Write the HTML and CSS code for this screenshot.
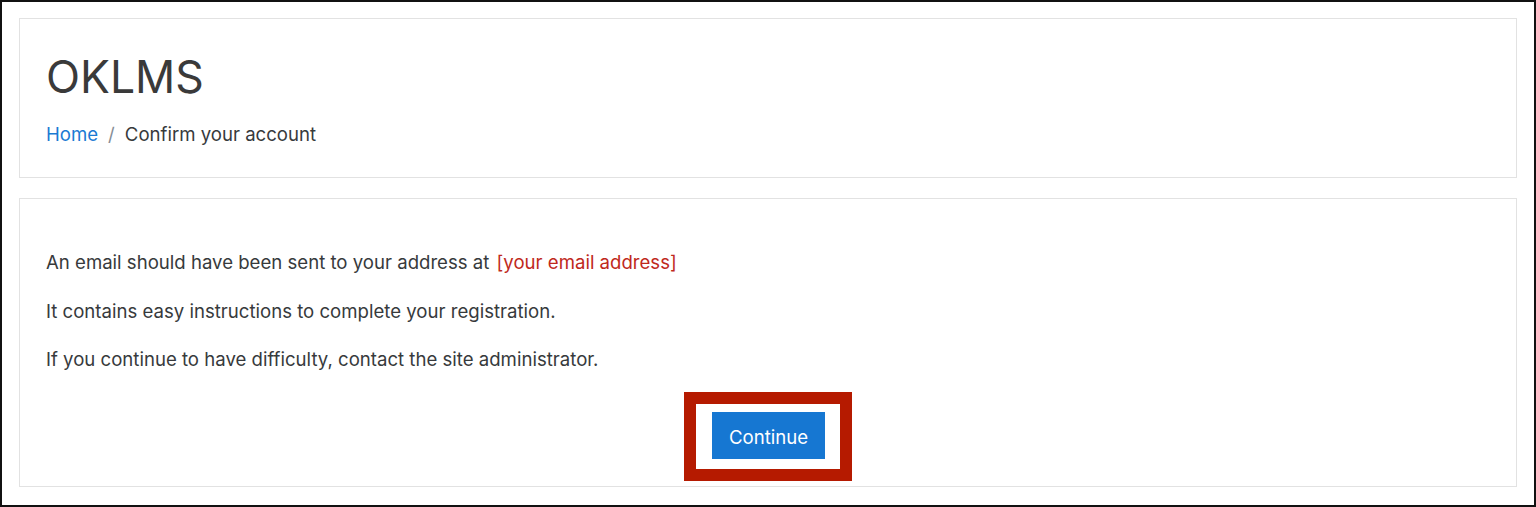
FILE: index.html
```html
<!DOCTYPE html>
<html lang="en">
<head>
<meta charset="utf-8">
<title>OKLMS - Confirm your account</title>
<link rel="stylesheet" href="styles.css">
</head>
<body>
<div class="frame">
  <header class="card header-card">
    <h1 class="site-title">OKLMS</h1>
    <nav class="breadcrumb">
      <a class="crumb-link" href="#">Home</a>
      <span class="crumb-sep">/</span>
      <span class="crumb-current">Confirm your account</span>
    </nav>
  </header>
  <main class="card main-card">
    <p class="msg">An email should have been sent to your address at <span class="email">[your email address]</span></p>
    <p class="msg">It contains easy instructions to complete your registration.</p>
    <p class="msg msg-last">If you continue to have difficulty, contact the site administrator.</p>
    <div class="actions">
      <div class="highlight">
        <button class="btn-primary" type="button">Continue</button>
      </div>
    </div>
  </main>
</div>
</body>
</html>
```
FILE: styles.css
```css
* { box-sizing: border-box; }
html, body { margin: 0; padding: 0; background: #fff; }
body {
  font-family: Inter, "Liberation Sans", Arial, sans-serif;
  color: #373a3c;
}
.frame {
  width: 1536px;
  height: 507px;
  border: 2px solid #111;
  padding: 16px 17px 18px 17px;
  display: flex;
  flex-direction: column;
  gap: 20px;
  overflow: hidden;
}
.card {
  border: 1px solid #e2e2e2;
  background: #fff;
}
.header-card {
  height: 160px;
  padding: 28px 26px 0 26px;
}
.site-title {
  margin: 0;
  font-size: 44.5px;
  font-weight: 400;
  line-height: 60px;
  color: #3a3a3a;
}
.breadcrumb {
  margin-top: 13px;
  display: flex;
  align-items: center;
  font-size: 18.6px;
  line-height: 28px;
}
.crumb-link { color: #1a7ad3; text-decoration: none; }
.crumb-sep { color: #868e96; padding: 0 10px; }
.crumb-current { color: #373a3c; }
.main-card {
  flex: 1;
  padding: 49px 26px 0 26px;
}
.msg {
  margin: 0 0 20.5px 0;
  font-size: 18.6px;
  line-height: 28px;
}
.msg-last { margin-bottom: 19px; }
.email { color: #c0291c; margin-left: 2px; }
.actions {
  display: flex;
  justify-content: center;
}
.highlight {
  border: 12px solid #b51a00;
  padding: 8px 15px 10px 16px;
}
.btn-primary {
  display: block;
  width: 113px;
  height: 47px;
  border: none;
  background: #1677d2;
  color: #fff;
  font-family: inherit;
  font-size: 18.6px;
  padding: 2px 0 0 0;
}
```
